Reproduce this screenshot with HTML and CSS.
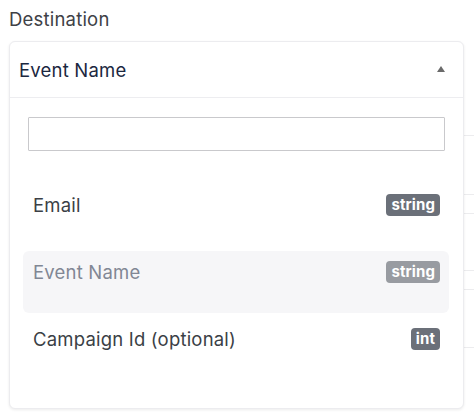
FILE: index.html
```html
<!DOCTYPE html>
<html>
<head>
<meta charset="utf-8">
<link rel="stylesheet" href="styles.css">
</head>
<body>
<div class="page">
  <div class="label">Destination</div>
  <div class="field">
    <div class="backdrop">
      <div class="bg-row r1"></div>
      <div class="bg-row r2"></div>
      <div class="bg-row r3"></div>
      <div class="bg-row r4"></div>
      <div class="bg-row r5"></div>
      <div class="bg-row r6"></div>
    </div>
    <div class="menu">
      <div class="menu-head">
        <span class="head-text">Event Name</span>
        <span class="caret"></span>
      </div>
      <div class="menu-body">
        <input class="search" type="text">
        <ul class="options">
          <li class="option"><span class="opt-name">Email</span><span class="badge">string</span></li>
          <li class="option active"><span class="opt-name">Event Name</span><span class="badge">string</span></li>
          <li class="option"><span class="opt-name">Campaign Id (optional)</span><span class="badge">int</span></li>
        </ul>
      </div>
    </div>
  </div>
</div>
</body>
</html>
```

FILE: styles.css
```css
* { box-sizing: border-box; }
html, body { margin: 0; padding: 0; background: #fff; }
body {
  font-family: Inter, "Noto Sans", "Liberation Sans", sans-serif;
  width: 474px;
  height: 415px;
  overflow: hidden;
}
.page {
  padding: 7px 0 0 9px;
}
.label {
  font-size: 18.5px;
  letter-spacing: 0.2px;
  line-height: 24px;
  color: #3e4146;
  height: 34px;
}
.field {
  position: relative;
  height: 374px;
}
.backdrop {
  display: flex;
  flex-direction: column;
  padding-left: 440px;
}
.bg-row { border-top: 1px solid #ececee; }
.r1 { margin-top: 94px; }
.r2 { margin-top: 58px; }
.r3 { margin-top: 18px; }
.r4 { margin-top: 56px; }
.r5 { margin-top: 18px; }
.r6 { margin-top: 57px; }
.menu {
  position: absolute;
  left: 0;
  top: 0;
  width: 455px;
  height: 368px;
  background: #fff;
  border: 1px solid #ececef;
  border-radius: 6px;
  box-shadow: 0 1px 3px rgba(0,0,0,0.08);
}
.menu-head {
  height: 56px;
  display: flex;
  align-items: center;
  justify-content: space-between;
  padding: 0 18px 0 9px;
  border-bottom: 1px solid #ededf0;
}
.head-text {
  font-size: 18.5px;
  letter-spacing: 0.2px;
  color: #1b2740;
}
.caret {
  width: 0;
  height: 0;
  border-left: 4.5px solid transparent;
  border-right: 4.5px solid transparent;
  border-bottom: 6px solid #6a6a6a;
  margin-top: -1px;
}
.menu-body {
  padding: 19px 14px 0 13px;
}
.search {
  display: block;
  margin: 0 4px 0 5px;
  width: 417px;
  height: 34px;
  border: 1px solid #c9c9cc;
  border-radius: 1px;
  background: #fff;
  outline: none;
}
.options {
  list-style: none;
  margin: 33px 0 0 0;
  padding: 0;
  display: flex;
  flex-direction: column;
  gap: 5px;
}
.option {
  height: 62px;
  display: flex;
  justify-content: space-between;
  align-items: flex-start;
  padding: 10px 9px 0 10px;
  border-radius: 6px;
}
.opt-name {
  font-size: 18.5px;
  letter-spacing: 0.2px;
  line-height: 24px;
  color: #3b3f46;
  margin-top: -1px;
}
.badge {
  font-size: 15px;
  font-weight: 700;
  line-height: 22px;
  height: 22px;
  padding: 0 5px;
  border-radius: 4px;
  background: #6b7079;
  color: #fff;
  letter-spacing: 0.1px;
}
.option.active { background: #f6f6f8; }
.option.active .opt-name { color: #818794; }
.option.active .badge { background: #989ba1; }
```
